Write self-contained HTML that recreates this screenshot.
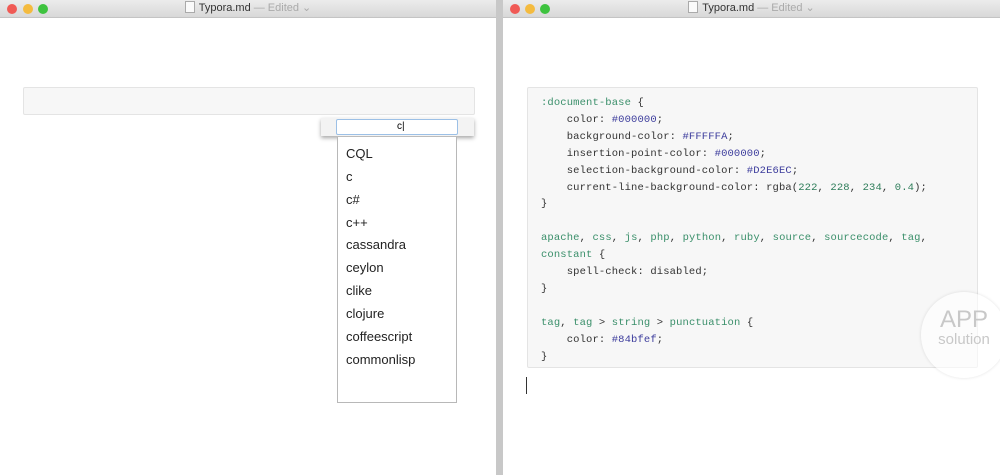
<!DOCTYPE html>
<html><head><style>
body{margin:0;width:1000px;height:475px;background:#c8c8c8;position:relative;overflow:hidden;font-family:"Liberation Sans",sans-serif}
.win{position:absolute;top:0;height:475px;background:#fff}
.tb{position:absolute;left:0;right:0;top:0;height:17px;background:linear-gradient(#ececec,#d8d8d8);border-bottom:1px solid #c4c4c4;text-align:center;font-size:11px;line-height:17px;color:#333}
.tb .e{color:#aaa}
.dot{position:absolute;top:4px;width:10px;height:10px;border-radius:50%}
.ic{display:inline-block;width:8px;height:10px;border:1px solid #aaa;background:#fafafa;vertical-align:-2px;margin-right:4px}
.code{position:absolute;background:#f7f7f7;border:1px solid #e4e4e4;border-radius:2px}
pre{margin:0;font-family:"Liberation Mono",monospace;font-size:10.5px;letter-spacing:0.13px;line-height:16.9px;color:#333}
.k{color:#3a8f6a}.n{color:#2e7d5a}.v{color:#3c3c9c}
.item{position:absolute;left:8px;font-size:13px;color:#222}
</style></head><body>
<div class="win" style="left:0;width:496px">
<div class="tb"><span class="dot" style="left:7px;background:#f05a55"></span><span class="dot" style="left:23px;background:#f4bb3f"></span><span class="dot" style="left:38px;background:#3ec33f"></span><span class="ic"></span>Typora.md <span class="e">— Edited ⌄</span></div>
<div class="code" style="left:23px;top:87px;width:450px;height:26px"></div>
<div style="position:absolute;left:321px;top:118px;width:153px;height:18px;background:#f3f3f3;box-shadow:0 2px 4px rgba(0,0,0,.35)"></div>
<div style="position:absolute;left:336px;top:119px;width:120px;height:14px;background:#fff;border:1px solid #9cc0e6;border-radius:2px;font-size:10px;text-align:center;line-height:14px;padding-left:120px;box-sizing:content-box;width:0;padding:0 60px 0 60px">c|</div>
<div style="position:absolute;left:337px;top:137px;width:118px;height:265px;background:#fff;border:1px solid #b8b8b8;border-top:none">
<div class="item" style="top:9px">CQL</div><div class="item" style="top:32px">c</div><div class="item" style="top:55px">c#</div><div class="item" style="top:78px">c++</div><div class="item" style="top:100px">cassandra</div><div class="item" style="top:123px">ceylon</div><div class="item" style="top:146px">clike</div><div class="item" style="top:169px">clojure</div><div class="item" style="top:192px">coffeescript</div><div class="item" style="top:215px">commonlisp</div>
</div>
</div>
<div class="win" style="left:503px;width:497px">
<div class="tb"><span class="dot" style="left:7px;background:#f05a55"></span><span class="dot" style="left:22px;background:#f4bb3f"></span><span class="dot" style="left:37px;background:#3ec33f"></span><span class="ic"></span>Typora.md <span class="e">— Edited ⌄</span></div>
<div class="code" style="left:24px;top:87px;width:449px;height:279px">
<pre style="position:absolute;left:13px;top:7px"><span class="k">:document-base</span> {
    color: <span class="v">#000000</span>;
    background-color: <span class="v">#FFFFFA</span>;
    insertion-point-color: <span class="v">#000000</span>;
    selection-background-color: <span class="v">#D2E6EC</span>;
    current-line-background-color: rgba(<span class="n">222</span>, <span class="n">228</span>, <span class="n">234</span>, <span class="n">0.4</span>);
}

<span class="k">apache</span>, <span class="k">css</span>, <span class="k">js</span>, <span class="k">php</span>, <span class="k">python</span>, <span class="k">ruby</span>, <span class="k">source</span>, <span class="k">sourcecode</span>, <span class="k">tag</span>,
<span class="k">constant</span> {
    spell-check: disabled;
}

<span class="k">tag</span>, <span class="k">tag</span> &gt; <span class="k">string</span> &gt; <span class="k">punctuation</span> {
    color: <span class="v">#84bfef</span>;
}</pre></div>
<div style="position:absolute;left:23px;top:377px;width:1px;height:17px;background:#333"></div>
<div style="position:absolute;left:418px;top:292px;width:86px;height:86px;border-radius:50%;background:rgba(255,255,255,.6);box-shadow:0 0 3px rgba(0,0,0,.12);text-align:center;color:#c8c8c8">
<div style="font-size:24px;margin-top:16px;line-height:24px">APP</div><div style="font-size:15px;line-height:15px">solution</div></div>
</div>
</body></html>
